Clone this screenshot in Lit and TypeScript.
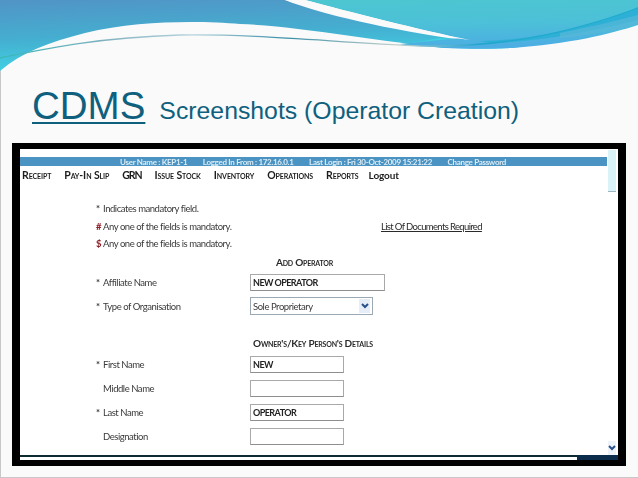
import { LitElement, html, css, svg } from "lit";
import { customElement } from "lit/decorators.js";

const swoosh = svg`<svg class="swoosh" viewBox="0 0 638 88" width="638" height="88" aria-hidden="true">
  <defs>
    <linearGradient id="left" x1="0.1" y1="0" x2="0.35" y2="1">
      <stop offset="0" stop-color="#5095c6"/><stop offset="0.5" stop-color="#45aed0"/><stop offset="1" stop-color="#3fd6e6"/>
    </linearGradient>
    <linearGradient id="right" x1="0" y1="0" x2="0.15" y2="1">
      <stop offset="0" stop-color="#4dc6d0"/><stop offset="0.55" stop-color="#4cc0d8"/><stop offset="1" stop-color="#4caee2"/>
    </linearGradient>
    <linearGradient id="thin" x1="0" y1="0" x2="1" y2="0">
      <stop offset="0" stop-color="#37b8b4"/><stop offset="0.16" stop-color="#7fb0c0"/><stop offset="0.3" stop-color="#b8d4de"/><stop offset="0.45" stop-color="#3a8fa8"/><stop offset="0.62" stop-color="#c4d0cc"/><stop offset="0.75" stop-color="#20a6cc"/><stop offset="1" stop-color="#20aed0"/>
    </linearGradient>
  </defs>
  <path fill="url(#left)" d="M0 71 L0 0 L285 0 C320 14 390 30 462 40 L520 48 L448 48 C380 42 300 26 240 24 C200 21 140 20 85 33 C50 42 22 52 0 71Z"/>
  <path fill="#3fd0e2" d="M400 45 C420 46 440 47 448 48 C470 49 500 49 510 48 L540 42 L468 40 L440 38Z"/>
  <path fill="url(#right)" d="M305 0 L638 0 L638 25 C610 34 570 44 510 48 C490 49 470 49 445 48 L400 44 L460 38 L468 40 C420 30 350 12 305 0Z"/>
  <path fill="#fafafa" d="M285 0 L305 0 C350 12 420 30 470 40 C420 34 340 16 285 0Z"/>
  <path fill="#2eb0d6" d="M480 41 C540 40 600 24 638 7 L638 20 C600 30 540 42 490 43Z"/>
  <path fill="#58b8d8" opacity=".7" d="M560 33 C590 27 620 20 638 15 L638 24 C610 32 585 36 560 38Z"/>
  <path fill="none" stroke="url(#thin)" stroke-width="1.3" d="M0 58 C40 50 90 38 180 35 C260 34 330 42 420 46 C470 47 540 44 638 8"/>
</svg>`;

const note = (mark: string, cls: string, text: string, link = "") => html`
  <div class="note"><span class="mark ${cls}">${mark}</span><span class="note-text">${text}</span>${link ? html`<a class="doc-link">${link}</a>` : ""}</div>`;

@customElement("app-root")
export class AppRoot extends LitElement {
  static styles = css`
    :host { display: block; width: 638px; height: 478px; overflow: hidden; }
    * { box-sizing: border-box; }
    .slide { width: 638px; height: 478px; background: #fafafa; border-left: 1px solid #c8c8c8; border-bottom: 1px solid #c8c8c8; display: flex; flex-direction: column; font-family: "Liberation Sans", Arial, sans-serif; }
    .swoosh { display: block; flex: none; margin-left: -1px; }
    .title { display: flex; align-items: baseline; height: 55px; margin-top: -4px; padding-left: 31px; color: #0e607e; white-space: nowrap; }
    .title-main { font-size: 38.5px; line-height: 44px; text-decoration: underline; text-decoration-thickness: 1.5px; text-underline-offset: 3px; }
    .title-sub { font-size: 24.8px; margin-left: 14px; }
    .frame { width: 614px; height: 323px; margin: 4px 0 0 11px; background: #fff; border: solid #000; border-width: 6px 8px 6px 8px; display: flex; flex-direction: column; filter: blur(.35px); }
    .body { flex: 1; display: flex; min-height: 0; }
    .page { flex: 1; min-width: 0; padding-top: 8px; font-family: Lato, "Open Sans", sans-serif; color: #3a3a3a; font-size: 9.5px; letter-spacing: -.45px; }
    .vbar { width: 11px; flex: none; display: flex; flex-direction: column; padding: 1px 2px 0 1px; justify-content: space-between; align-items: stretch; }
    .thumb { height: 42px; background: #d9f3f8; border-bottom: 1px solid #9fb4c0; }
    .arrow { height: 14px; display: flex; align-items: center; justify-content: center; background: #eef3f9; }
    .arrow svg { display: block; }
    .hbar { height: 5px; flex: none; display: flex; flex-direction: column; }
    .hline { height: 2px; background: #0c2a34; }
    .hrow { flex: 1; display: flex; }
    .hthumb { width: 41px; margin-left: auto; background: #0b2c4a; margin-top: -2px; height: 5px; }
    .status { height: 9px; width: 587px; background: #4a93c2; color: #dcecf4; display: flex; align-items: center; padding-left: 100px; font-size: 8px; font-weight: 700; letter-spacing: -.3px; white-space: nowrap; gap: 15.5px; }
    .menu { display: flex; height: 18px; align-items: center; padding-left: 2px; color: #1c1c1c; font-size: 10.5px; font-weight: 700; font-variant: small-caps; letter-spacing: -.1px; white-space: nowrap; gap: 13px; }
    .menu .grn { letter-spacing: -1.1px; }
    .menu .plain { font-variant: normal; font-size: 10px; margin-left: -3px; }
    .content { padding: 16px 0 0 76px; }
    .note { display: flex; align-items: center; height: 17.5px; white-space: nowrap; }
    .mark { width: 7px; flex: none; font-weight: 700; }
    .mark.red { color: #8c1c24; }
    .note-text { width: 278px; flex: none; }
    .doc-link { text-decoration: underline; color: #2a2a2a; letter-spacing: -.65px; }
    .form { display: grid; grid-template-columns: 154px 1fr; }
    .head { grid-column: 2; font-weight: 700; font-size: 10px; letter-spacing: -.2px; font-variant: small-caps; color: #2a2a2a; display: flex; align-items: center; white-space: nowrap; }
    .head.a { padding-left: 26px; height: 18px; }
    .head.b { padding-left: 3px; height: 19px; margin-top: 16px; }
    .label { display: flex; align-items: center; height: 24px; white-space: nowrap; }
    .label .none { padding-left: 7px; }
    .field { display: flex; align-items: center; height: 24px; }
    .input { height: 17px; border: 1px solid #a9a9a9; border-bottom-color: #8e8e8e; background: #fff; padding-left: 2px; font-weight: 700; font-size: 9px; letter-spacing: -.55px; line-height: 15px; color: #222; width: 94px; }
    .input.wide { width: 135px; }
    .select { height: 18px; width: 123px; border: 1px solid #9aa9b4; padding: 0 2px; display: flex; align-items: center; justify-content: space-between; color: #3a3a3a; }
    .caret { width: 11px; height: 14px; background: #e6edf7; display: flex; align-items: center; justify-content: center; }
    .r23 { height: 23px; }
  `;

  render() {
    return html`<div class="slide">
      ${swoosh}
      <div class="title"><span class="title-main">CDMS</span><span class="title-sub">Screenshots (Operator Creation)</span></div>
      <div class="frame">
        <div class="body">
          <div class="page">
            <div class="status"><span>User Name : KEP1-1</span><span>Logged In From : 172.16.0.1</span><span>Last Login : Fri 30-Oct-2009 15:21:22</span><span>Change Password</span></div>
            <div class="menu"><span>Receipt</span><span>Pay-In Slip</span><span class="grn">GRN</span><span>Issue Stock</span><span>Inventory</span><span>Operations</span><span>Reports</span><span class="plain">Logout</span></div>
            <div class="content">
              ${note("*", "", "Indicates mandatory field.")}
              ${note("#", "red", "Any one of the fields is mandatory.", "List Of Documents Required")}
              ${note("$", "red", "Any one of the fields is mandatory.")}
              <div class="form">
                <div class="head a">Add Operator</div>
                <div class="label"><span class="mark">*</span>Affiliate Name</div>
                <div class="field"><div class="input wide">NEW OPERATOR</div></div>
                <div class="label r23"><span class="mark">*</span>Type of Organisation</div>
                <div class="field r23"><div class="select">Sole Proprietary<span class="caret"><svg width="8" height="6" viewBox="0 0 8 6"><path d="M1 1 L4 4 L7 1" fill="none" stroke="#27508c" stroke-width="2"/></svg></span></div></div>
                <div class="head b">Owner's/Key Person's Details</div>
                <div class="label"><span class="mark">*</span>First Name</div>
                <div class="field"><div class="input">NEW</div></div>
                <div class="label"><span class="none">Middle Name</span></div>
                <div class="field"><div class="input"></div></div>
                <div class="label"><span class="mark">*</span>Last Name</div>
                <div class="field"><div class="input">OPERATOR</div></div>
                <div class="label"><span class="none">Designation</span></div>
                <div class="field"><div class="input"></div></div>
              </div>
            </div>
          </div>
          <div class="vbar"><div class="thumb"></div><div class="arrow"><svg width="8" height="6" viewBox="0 0 8 6"><path d="M1 1 L4 4 L7 1" fill="none" stroke="#27508c" stroke-width="2"/></svg></div></div>
        </div>
        <div class="hbar"><div class="hline"></div><div class="hrow"><div class="hthumb"></div></div></div>
      </div>
    </div>`;
  }
}
